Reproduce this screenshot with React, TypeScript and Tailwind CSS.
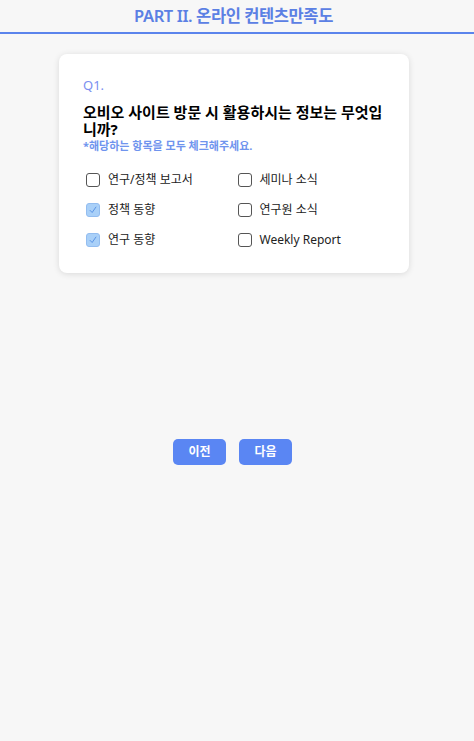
import { useState } from 'react';

const options = [
  '연구/정책 보고서',
  '세미나 소식',
  '정책 동향',
  '연구원 소식',
  '연구 동향',
  'Weekly Report',
];

export default function App() {
  const [checked, setChecked] = useState<string[]>(['정책 동향', '연구 동향']);

  const toggle = (opt: string) => {
    setChecked((prev) =>
      prev.includes(opt) ? prev.filter((o) => o !== opt) : [...prev, opt]
    );
  };

  return (
    <div
      className="min-h-[741px] bg-[#f7f7f7] flex flex-col"
      style={{ fontFamily: '"Noto Sans", "Noto Sans CJK KR", sans-serif' }}
    >
      <div className="h-[34px] border-b-2 border-[#5b84ec] flex items-center justify-center pr-[7px]">
        <h1 className="text-[16.5px] font-semibold text-[#5b80e4] tracking-tight leading-none">
          PART II. 온라인 컨텐츠만족도
        </h1>
      </div>

      <div className="flex justify-center pt-[20px] pr-[6px]">
        <div className="w-[350px] bg-white rounded-lg shadow-[0_1px_6px_rgba(0,0,0,0.12)] pl-[24px] pr-[20px] pt-[25px] pb-[24px]">
          <p className="text-[13px] text-[#7b8ff0] leading-none">Q1.</p>
          <h2 className="mt-[12px] w-[300px] text-[15px] font-bold text-black leading-[17px]">
            오비오 사이트 방문 시 활용하시는 정보는 무엇입니까?
          </h2>
          <p className="text-[11px] font-bold text-[#6f94ee] leading-[15px]">
            *해당하는 항목을 모두 체크해주세요.
          </p>

          <div className="grid grid-cols-2 gap-y-[12px] mt-[18px] pl-[3px]">
            {options.map((opt) => {
              const on = checked.includes(opt);
              return (
                <label
                  key={opt}
                  className="flex items-center gap-[8px] cursor-pointer h-[18px]"
                  onClick={() => toggle(opt)}
                >
                  {on ? (
                    <span className="w-[14px] h-[14px] rounded-[3px] bg-[#a9d0f8] border border-[#93bdf0] flex items-center justify-center">
                      <svg viewBox="0 0 12 12" className="w-[10px] h-[10px]">
                        <path d="M2.5 6.5 L5 9 L9.5 2.5" fill="none" stroke="#5a94e6" strokeWidth="1.2" strokeLinecap="round" strokeLinejoin="round" />
                      </svg>
                    </span>
                  ) : (
                    <span className="w-[14px] h-[14px] rounded-[3px] bg-white border border-[#555]" />
                  )}
                  <span className="text-[12px] text-[#222] leading-none">{opt}</span>
                </label>
              );
            })}
          </div>
        </div>
      </div>

      <div className="flex justify-center gap-[13px] mt-[166px] pr-[9px]">
        <button className="w-[53px] h-[26px] rounded-[5px] bg-[#5a86f3] text-white text-[12px] font-bold">
          이전
        </button>
        <button className="w-[53px] h-[26px] rounded-[5px] bg-[#5a86f3] text-white text-[12px] font-bold">
          다음
        </button>
      </div>
    </div>
  );
}
